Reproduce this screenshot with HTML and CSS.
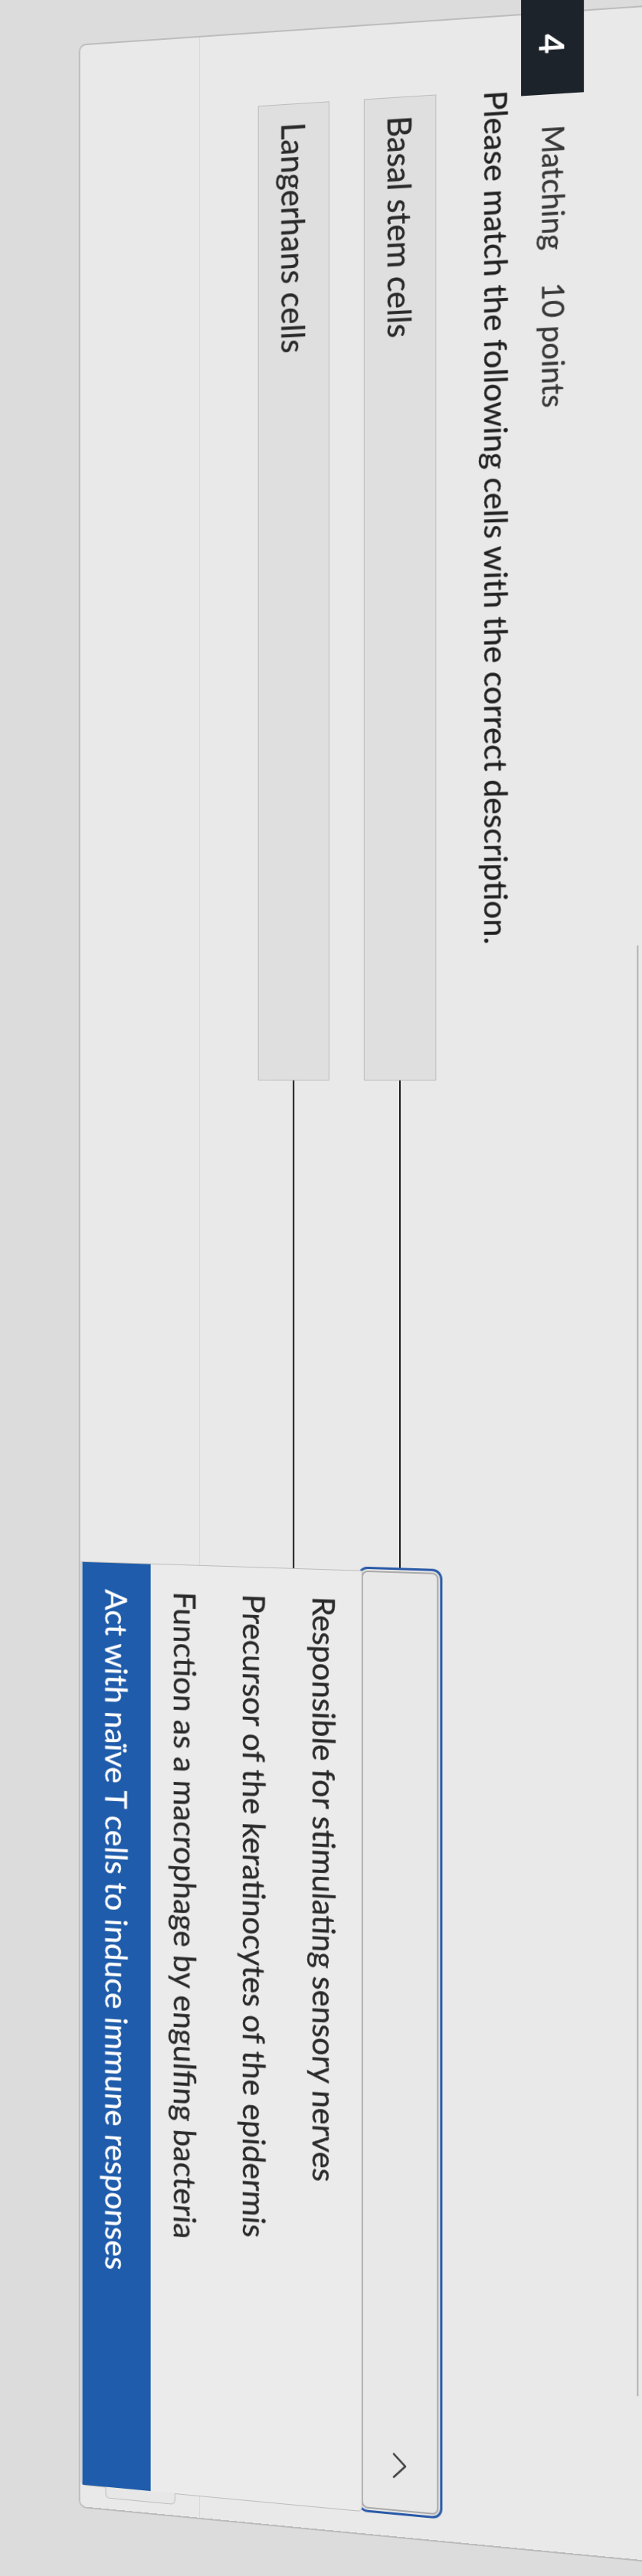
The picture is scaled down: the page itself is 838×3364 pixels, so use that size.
FILE: index.html
```html
<!DOCTYPE html>
<html lang="en">
<head>
<meta charset="utf-8">
<title>Matching question</title>
<link rel="stylesheet" href="styles.css">
</head>
<body>
<div class="viewport">
  <div class="page">
    <section class="card">
      <div class="badge">4</div>
      <div class="edge-rule"></div>
      <div class="meta"><span>Matching</span><span>10 points</span></div>
      <p class="prompt">Please match the following cells with the correct description.</p>
      <div class="rows">
        <div class="row">
          <div class="stem">Basal stem cells</div>
          <div class="connector"></div>
          <div class="select is-open">
            <svg class="chevron" width="34" height="20" viewBox="0 0 34 20"><polyline points="2,18 17,3 32,18"/></svg>
          </div>
        </div>
        <div class="row">
          <div class="stem">Langerhans cells</div>
          <div class="connector"></div>
          <div class="select">
            <svg class="chevron" width="34" height="20" viewBox="0 0 34 20"><polyline points="2,2 17,17 32,2"/></svg>
          </div>
        </div>
        <ul class="listbox">
          <li class="option">Responsible for stimulating sensory nerves</li>
          <li class="option">Precursor of the keratinocytes of the epidermis</li>
          <li class="option">Function as a macrophage by engulfing bacteria</li>
          <li class="option is-active">Act with naïve T cells to induce immune responses</li>
        </ul>
      </div>
      <div class="divider"></div>
    </section>
  </div>
</div>
</body>
</html>
```
FILE: styles.css
```css
html, body {
  margin: 0;
  padding: 0;
  background: #dcdcdc;
}

.viewport {
  width: 838px;
  height: 3364px;
  overflow: hidden;
  background: #dcdcdc;
  perspective: 2000px;
  perspective-origin: 419px 1400px;
}

.page {
  width: 3364px;
  height: 838px;
  box-sizing: border-box;
  padding-left: 36px;
  transform-origin: 0 0;
  transform: translateX(419px) rotateY(-5.74deg) translateX(419px) rotate(90deg);
  font-family: Lato, "Open Sans", sans-serif;
  color: #262626;
  -webkit-text-stroke: 0.35px currentColor;
}

.card {
  position: relative;
  width: 3269px;
  height: 742px;
  box-sizing: border-box;
  background: #e9e9e9;
  border: 2px solid #bcbcbc;
  border-top: 0;
  border-radius: 0 0 10px 10px;
  padding: 0 0 0 95px;
}

.badge {
  position: absolute;
  left: -26px;
  top: 80px;
  width: 130px;
  height: 80px;
  background: #1d232b;
  color: #ffffff;
  font-weight: 700;
  font-size: 44px;
  -webkit-text-stroke: 0;
  display: flex;
  align-items: center;
  justify-content: center;
}

.edge-rule {
  position: absolute;
  top: 11px;
  left: 1200px;
  width: 1856px;
  height: 2px;
  background: #b4b4b4;
}

.meta {
  display: flex;
  gap: 42px;
  margin: 0 0 0 49px;
  padding-top: 95px;
  font-size: 39px;
  line-height: 47px;
  color: #383838;
}

.prompt {
  margin: 24px 0 0 0;
  font-size: 41.5px;
  line-height: 50px;
  color: #222222;
}

.rows {
  position: relative;
  display: flex;
  flex-direction: column;
  gap: 39px;
  margin-top: 50px;
}

.row {
  display: flex;
  align-items: center;
  height: 100px;
}

.stem {
  width: 1278px;
  height: 94px;
  box-sizing: border-box;
  flex: none;
  display: flex;
  align-items: center;
  padding-left: 24px;
  background: #dfdfdf;
  border: 1.5px solid #bcbcbc;
  font-size: 42px;
  color: #2a2a2a;
}

.connector {
  width: 638px;
  height: 2px;
  flex: none;
  background: #1c1c1c;
}

.select {
  width: 1221px;
  height: 100px;
  box-sizing: border-box;
  flex: none;
  display: flex;
  align-items: center;
  justify-content: flex-end;
  padding-right: 40px;
  background: #e8e8e8;
  border: 2px solid #a9a9a9;
  border-radius: 8px;
}

.select.is-open {
  box-shadow: 0 0 0 2px #e6e6e6, 0 0 0 5px #2a5aa8;
}

.chevron polyline {
  fill: none;
  stroke: #454545;
  stroke-width: 2.5;
  stroke-linecap: round;
  stroke-linejoin: round;
}

.listbox {
  position: absolute;
  top: 99px;
  left: 1916px;
  width: 1226px;
  height: 373.5px;
  box-sizing: border-box;
  margin: 0;
  padding: 2.5px 0 0 0;
  list-style: none;
  background: #ebebeb;
  border: 1.5px solid #bcbcbc;
  border-radius: 0 6px 6px 0;
  z-index: 2;
}

.listbox::after {
  content: "";
  position: absolute;
  left: 100%;
  bottom: 32px;
  width: 14px;
  height: 92px;
  border: 1.5px solid #bdbdbd;
  border-left: 0;
  border-radius: 0 6px 6px 0;
  background: #e7e7e7;
}

.option {
  height: 92px;
  line-height: 92px;
  padding-left: 35px;
  font-size: 41px;
  color: #2a2a2a;
  white-space: nowrap;
}

.option.is-active {
  background: #1f5cab;
  color: #ffffff;
}

.divider {
  margin-top: 74px;
  margin-left: -95px;
  border-top: 1.5px solid #d9d9d9;
}
```
